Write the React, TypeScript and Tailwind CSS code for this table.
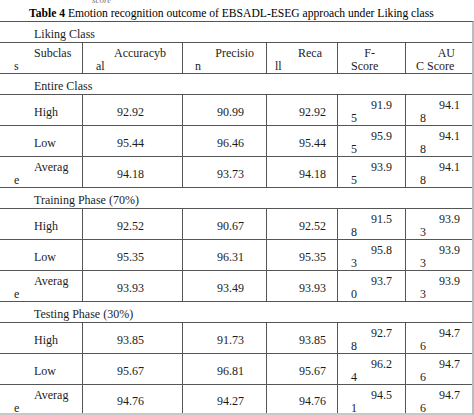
type Cell = { a: string; b?: string; ca?: string; cb?: string };

const cols = ["w-[83px]", "w-[100px]", "w-[84px]", "w-[71px]", "w-[68px]", "w-[66px]"];

function Two({ a, b, ca, cb, last }: Cell & { last?: boolean }) {
  return (
    <div className={`h-full flex flex-col pt-[4px] leading-[13px] ${last ? "" : "border-r border-[#555]"}`}>
      <div className={ca}>{a}</div>
      <div className={cb}>{b}</div>
    </div>
  );
}

function One({ a, ca, last }: { a: string; ca: string; last?: boolean }) {
  return (
    <div className={`h-full flex items-center pt-[3px] ${last ? "" : "border-r border-[#555]"}`}>
      <div className={ca}>{a}</div>
    </div>
  );
}

function Section({ label }: { label: string }) {
  return (
    <div className="h-[21px] border-b border-[#555] flex items-center pt-[3px] pl-[34px]">{label}</div>
  );
}

function DataRow({ label, tail, v, f, auc, end }: { label: string; tail?: string; v: string[]; f: [string, string]; auc: [string, string]; end?: boolean }) {
  return (
    <div className={`flex ${end ? "h-[30px] border-b-2 border-[#c8c8c8]" : "h-[31px] border-b border-[#555]"}`}>
      <div className={cols[0]}>
        {tail ? (
          <Two a={label} b={tail} ca="pl-[34px]" cb="pl-[14px]" />
        ) : (
          <One a={label} ca="pl-[34px]" />
        )}
      </div>
      <div className={cols[1]}><One a={v[0]} ca="pl-[34px]" /></div>
      <div className={cols[2]}><One a={v[1]} ca="pl-[34px]" /></div>
      <div className={cols[3]}><One a={v[2]} ca="pl-[32px]" /></div>
      <div className={cols[4]}><Two a={f[0]} b={f[1]} ca="text-right pr-[13px]" cb="pl-[13px]" /></div>
      <div className={cols[5]}><Two a={auc[0]} b={auc[1]} ca="text-right pr-[12px]" cb="pl-[14px]" last /></div>
    </div>
  );
}

const groups = [
  {
    name: "Entire Class",
    rows: [
      { label: "High", v: ["92.92", "90.99", "92.92"], f: ["91.9", "5"], auc: ["94.1", "8"] },
      { label: "Low", v: ["95.44", "96.46", "95.44"], f: ["95.9", "5"], auc: ["94.1", "8"] },
      { label: "Averag", tail: "e", v: ["94.18", "93.73", "94.18"], f: ["93.9", "5"], auc: ["94.1", "8"] },
    ],
  },
  {
    name: "Training Phase (70%)",
    rows: [
      { label: "High", v: ["92.52", "90.67", "92.52"], f: ["91.5", "8"], auc: ["93.9", "3"] },
      { label: "Low", v: ["95.35", "96.31", "95.35"], f: ["95.8", "3"], auc: ["93.9", "3"] },
      { label: "Averag", tail: "e", v: ["93.93", "93.49", "93.93"], f: ["93.7", "0"], auc: ["93.9", "3"] },
    ],
  },
  {
    name: "Testing Phase (30%)",
    rows: [
      { label: "High", v: ["93.85", "91.73", "93.85"], f: ["92.7", "8"], auc: ["94.7", "6"] },
      { label: "Low", v: ["95.67", "96.81", "95.67"], f: ["96.2", "4"], auc: ["94.7", "6"] },
      { label: "Averag", tail: "e", v: ["94.76", "94.27", "94.76"], f: ["94.5", "1"], auc: ["94.7", "6"] },
    ],
  },
];

export default function App() {
  return (
    <div className="w-[474px] h-[415px] overflow-hidden bg-white text-[#1c1c1c] text-[12px] font-['Liberation_Serif','Times_New_Roman',serif]">
      <div className="h-[6px] overflow-hidden">
        <div className="-mt-[6px] pl-[92px] text-[9px] italic text-[#777] leading-[12px]">score</div>
      </div>
      <div className="h-[15px] pl-[29px] text-[11.6px] leading-[16px] text-black whitespace-nowrap">
        <span className="font-bold">Table 4</span> Emotion recognition outcome of EBSADL-ESEG approach under Liking class
      </div>
      <div className="w-[474px] border-t border-[#555] border-r-2 border-r-[#bdbdbd]">
        <Section label="Liking Class" />
        <div className="flex h-[31px] border-b border-[#555]">
          <div className={cols[0]}><Two a="Subclas" b="s" ca="pl-[34px]" cb="pl-[14px]" /></div>
          <div className={cols[1]}><Two a="Accuracyb" b="al" ca="text-right pr-[16px]" cb="pl-[13px]" /></div>
          <div className={cols[2]}><Two a="Precisio" b="n" ca="text-right pr-[12px]" cb="pl-[12px]" /></div>
          <div className={cols[3]}><Two a="Reca" b="ll" ca="text-right pr-[15px]" cb="pl-[8px]" /></div>
          <div className={cols[4]}><Two a="F-" b="Score" ca="text-right pr-[30px]" cb="pl-[13px]" /></div>
          <div className={cols[5]}><Two a="AU" b="C Score" ca="text-right pr-[17px]" cb="pl-[10px]" last /></div>
        </div>
        {groups.map((g, gi) => (
          <div key={g.name}>
            <Section label={g.name} />
            {g.rows.map((r, ri) => (
              <DataRow
                key={r.label}
                label={r.label}
                tail={r.tail}
                v={r.v}
                f={r.f as [string, string]}
                auc={r.auc as [string, string]}
                end={gi === 2 && ri === 2}
              />
            ))}
          </div>
        ))}
      </div>
    </div>
  );
}
